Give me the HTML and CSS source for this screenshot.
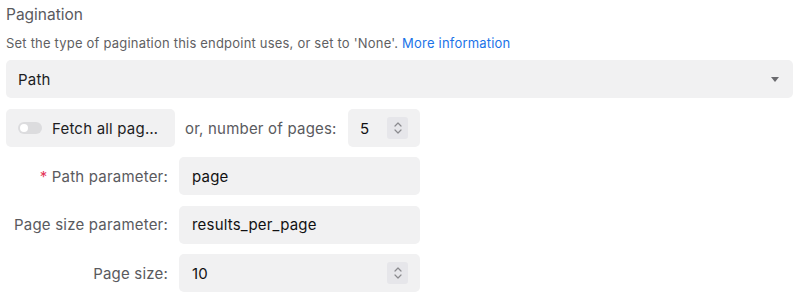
FILE: index.html
```html
<!DOCTYPE html>
<html lang="en">
<head>
    <meta charset="UTF-8">
    <title>Pagination</title>
    <link rel="stylesheet" href="styles.css">
</head>
<body>
    <div class="panel">
        <div class="title">Pagination</div>
        <div class="hint">Set the type of pagination this endpoint uses, or set to 'None'. <a href="#" class="link">More information</a></div>

        <div class="select">
            <span>Path</span>
            <span class="caret"></span>
        </div>

        <div class="row">
            <div class="toggle-box" title="Fetch all pages">
                <span class="switch"><span class="knob"></span></span>
                <span class="toggle-label">Fetch all pages</span>
            </div>
            <span class="or-text">or, number of pages:</span>
            <div class="field number small">
                <span>5</span>
                <span class="stepper">
                    <svg width="10" height="16" viewBox="0 0 10 16"><path d="M2 6 L5 3 L8 6 M2 10 L5 13 L8 10" fill="none" stroke="#8a8a8e" stroke-width="1.2" stroke-linecap="round" stroke-linejoin="round"/></svg>
                </span>
            </div>
        </div>

        <div class="form-grid">
            <label class="form-label"><span class="req">*</span> Path parameter:</label>
            <div class="field">page</div>

            <label class="form-label">Page size parameter:</label>
            <div class="field">results_per_page</div>

            <label class="form-label">Page size:</label>
            <div class="field number">
                <span>10</span>
                <span class="stepper">
                    <svg width="10" height="16" viewBox="0 0 10 16"><path d="M2 6 L5 3 L8 6 M2 10 L5 13 L8 10" fill="none" stroke="#8a8a8e" stroke-width="1.2" stroke-linecap="round" stroke-linejoin="round"/></svg>
                </span>
            </div>
        </div>
    </div>
</body>
</html>
```

FILE: styles.css
```css
body {
    margin: 0;
    font-family: 'Inter', 'Noto Sans', sans-serif;
    background: #ffffff;
    color: #1d1d1f;
}

.panel {
    padding: 5px 7px 0 6px;
}

.title {
    font-size: 15.5px;
    line-height: 20px;
    color: #5a5a5e;
}

.hint {
    margin-top: 9px;
    font-size: 13px;
    letter-spacing: 0.2px;
    line-height: 18px;
    color: #5f5f63;
}

.link {
    color: #1a73e8;
    text-decoration: none;
}

.select {
    margin-top: 8px;
    height: 38px;
    background: #f1f1f2;
    border-radius: 5px;
    display: flex;
    align-items: center;
    justify-content: space-between;
    padding: 0 14px 0 12px;
    font-size: 15px;
    letter-spacing: 0.2px;
}

.caret {
    width: 0;
    height: 0;
    border-left: 4px solid transparent;
    border-right: 4px solid transparent;
    border-top: 5px solid #6b6b6f;
}

.row {
    margin-top: 11px;
    width: 414px;
    display: flex;
    align-items: center;
}

.toggle-box {
    width: 169px;
    height: 38px;
    box-sizing: border-box;
    background: #f1f1f2;
    border-radius: 5px;
    display: flex;
    align-items: center;
    padding: 0 16px 0 12px;
    gap: 10px;
}

.switch {
    flex: none;
    width: 24px;
    height: 12px;
    border-radius: 6px;
    background: #dcdcde;
    position: relative;
}

.knob {
    position: absolute;
    left: 2px;
    top: 2px;
    width: 8px;
    height: 8px;
    border-radius: 50%;
    background: #ffffff;
}

.toggle-label {
    font-size: 15px;
    letter-spacing: 0.2px;
    white-space: nowrap;
    overflow: hidden;
    text-overflow: ellipsis;
}

.or-text {
    margin-left: 10px;
    font-size: 15px;
    letter-spacing: 0.2px;
    color: #5a5a5e;
}

.field {
    height: 38px;
    box-sizing: border-box;
    background: #f1f1f2;
    border-radius: 5px;
    display: flex;
    align-items: center;
    padding: 0 12px 0 13px;
    font-size: 15px;
    letter-spacing: 0.2px;
    color: #111113;
}

.field.number {
    justify-content: space-between;
}

.field.small {
    width: 72px;
    margin-left: auto;
    padding-left: 12px;
}

.stepper {
    width: 21px;
    height: 22px;
    background: #e6e6ea;
    border-radius: 3px;
    display: flex;
    align-items: center;
    justify-content: center;
}

.form-grid {
    margin-top: 10px;
    display: grid;
    grid-template-columns: 162px 241px;
    column-gap: 11px;
    row-gap: 10.5px;
    align-items: center;
}

.form-label {
    text-align: right;
    font-size: 15px;
    letter-spacing: 0.2px;
    color: #5a5a5e;
}

.req {
    color: #e5365a;
}
```
